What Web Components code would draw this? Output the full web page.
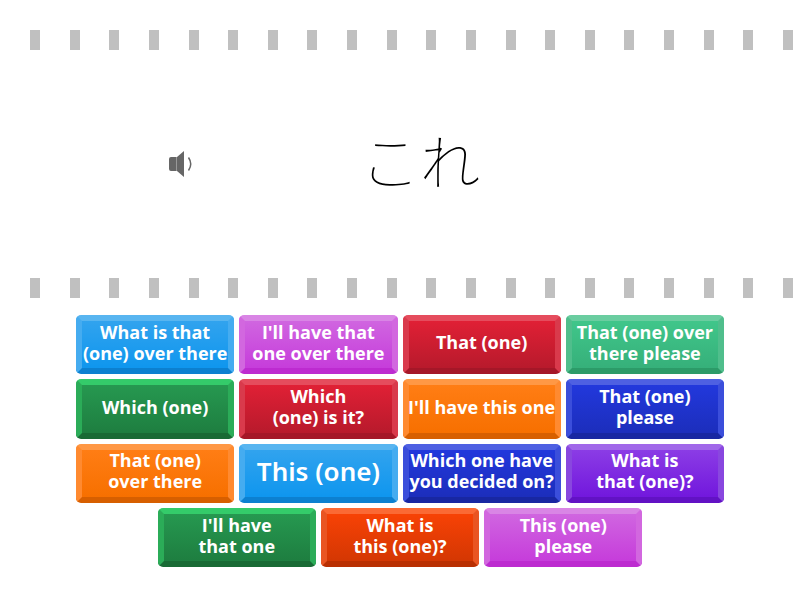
<!DOCTYPE html>
<html lang="en">
<head>
<meta charset="utf-8">
<meta name="viewport" content="width=device-width, initial-scale=1">
<title>Find the match</title>
<style>
  body {
    margin: 0;
    background: #fff;
    font-family: "Open Sans", "Noto Sans", "Noto Sans CJK JP", sans-serif;
  }
</style>
</head>
<body>
<match-game></match-game>

<script>
class FilmStrip extends HTMLElement {
  constructor() {
    super();
    this.attachShadow({ mode: "open" });
  }

  connectedCallback() {
    this.shadowRoot.innerHTML = `
      <style>
        :host {
          display: flex;
          justify-content: space-between;
          padding: 0 7px 0 30px;
        }

        .hole {
          width: 10px;
          height: 20px;
          background: #c0c0c0;
        }
      </style>

      ${'<div class="hole"></div>'.repeat(20)}
    `;
  }
}

customElements.define("film-strip", FilmStrip);

class QuestionCard extends HTMLElement {
  constructor() {
    super();
    this.attachShadow({ mode: "open" });
  }

  connectedCallback() {
    this.shadowRoot.innerHTML = `
      <style>
        :host {
          display: grid;
          grid-template-columns: 45% 15% 1fr;
          align-items: center;
          height: 228px;
        }

        .sound {
          justify-self: center;
          display: block;
          padding: 0;
          border: none;
          background: none;
          cursor: pointer;
        }

        .sound svg {
          display: block;
        }

        .word {
          justify-self: center;
          padding-bottom: 10px;
          white-space: nowrap;
          font-family: "Noto Sans CJK JP", sans-serif;
          font-size: 60px;
          font-weight: 100;
          line-height: 64px;
          color: #000;
        }
      </style>

      <button class="sound" type="button" aria-label="Play sound">
        <svg width="24" height="28" viewBox="0 0 24 28">
          <path fill="#666" d="M3 7h5v14H3a2 2 0 0 1-2-2V9a2 2 0 0 1 2-2zM8 7h1l7-6v26l-7-6H8z"/>
          <path stroke="#999" d="M8.500 7v14"/>
          <path fill="none" stroke="#666" stroke-width="1.500" d="M20.500 7.500q4.500 6.500 0 13"/>
        </svg>
      </button>
      <div class="word" lang="ja"><slot></slot></div>
    `;
  }
}

customElements.define("question-card", QuestionCard);

// face gradient, then the top, side and bottom bevels
const colors = {
  sky: ["#31a3ee", "#0f96ee", "#58b5f0", "#45acf0", "#0c80d0"],
  orchid: ["#d065e0", "#c63ddb", "#d985e5", "#d267df", "#bd2bd0"],
  red: ["#e02035", "#b81a2c", "#e54c5d", "#d93a4c", "#a51728"],
  mint: ["#40c68a", "#36b07a", "#6acda0", "#50be8c", "#2c9b68"],
  green: ["#269850", "#1e7e40", "#34cb6a", "#2bac58", "#196a35"],
  orange: ["#ff7d14", "#f77000", "#ff9845", "#ff8a30", "#d75f00"],
  blue: ["#2238dc", "#1c2ebc", "#4e60e2", "#3b4edb", "#1827a2"],
  violet: ["#8b3ce5", "#7218dd", "#a168e9", "#8947df", "#6212c4"],
  flame: ["#f74205", "#d43703", "#fb6934", "#e95522", "#b92f02"]
};

class AnswerTile extends HTMLElement {
  constructor() {
    super();
    this.attachShadow({ mode: "open" });
  }

  static get observedAttributes() {
    return ["color"];
  }

  connectedCallback() {
    this.render();
  }

  attributeChangedCallback() {
    this.render();
  }

  render() {
    const [from, to, top, side, bottom] = colors[this.getAttribute("color")] || colors.sky;

    this.shadowRoot.innerHTML = `
      <style>
        :host {
          display: block;
          aspect-ratio: 8 / 3;
          font-size: 18px;
          font-weight: 700;
          line-height: 21px;
        }

        :host([large]) {
          font-family: "Noto Sans", "Open Sans", sans-serif;
          font-size: 26px;
          font-weight: 600;
          line-height: 30px;
        }

        .tile {
          display: flex;
          align-items: center;
          justify-content: center;
          box-sizing: border-box;
          width: 100%;
          height: 100%;
          padding: 0 0 4px;
          border: 6px solid;
          border-color: ${top} ${side} ${bottom};
          border-radius: 5px;
          background: linear-gradient(${from}, ${to});
          color: #fff;
          font: inherit;
          text-align: center;
          white-space: nowrap;
          cursor: pointer;
        }
      </style>

      <button class="tile" type="button"><span><slot></slot></span></button>
    `;
  }
}

customElements.define("answer-tile", AnswerTile);

class MatchGame extends HTMLElement {
  constructor() {
    super();
    this.attachShadow({ mode: "open" });
  }

  connectedCallback() {
    this.shadowRoot.innerHTML = `
      <style>
        :host {
          display: block;
          padding-top: 30px;
        }

        .answers {
          display: flex;
          flex-wrap: wrap;
          justify-content: center;
          gap: 5px;
          width: 81%;
          margin: 17px auto 0;
        }

        answer-tile {
          flex: 0 0 calc((100% - 15px) / 4);
          min-width: 0;
          min-height: 0;
        }
      </style>

      <film-strip></film-strip>
      <question-card>これ</question-card>
      <film-strip></film-strip>

      <div class="answers">
        <answer-tile color="sky">What is that<br>(one) over there</answer-tile>
        <answer-tile color="orchid">I'll have that<br>one over there</answer-tile>
        <answer-tile color="red">That (one)</answer-tile>
        <answer-tile color="mint">That (one) over<br>there please</answer-tile>
        <answer-tile color="green">Which (one)</answer-tile>
        <answer-tile color="red">Which<br>(one) is it?</answer-tile>
        <answer-tile color="orange">I'll have this one</answer-tile>
        <answer-tile color="blue">That (one)<br>please</answer-tile>
        <answer-tile color="orange">That (one)<br>over there</answer-tile>
        <answer-tile color="sky" large>This (one)</answer-tile>
        <answer-tile color="blue">Which one have<br>you decided on?</answer-tile>
        <answer-tile color="violet">What is<br>that (one)?</answer-tile>
        <answer-tile color="green">I'll have<br>that one</answer-tile>
        <answer-tile color="flame">What is<br>this (one)?</answer-tile>
        <answer-tile color="orchid">This (one)<br>please</answer-tile>
      </div>
    `;
  }
}

customElements.define("match-game", MatchGame);
</script>
</body>
</html>
